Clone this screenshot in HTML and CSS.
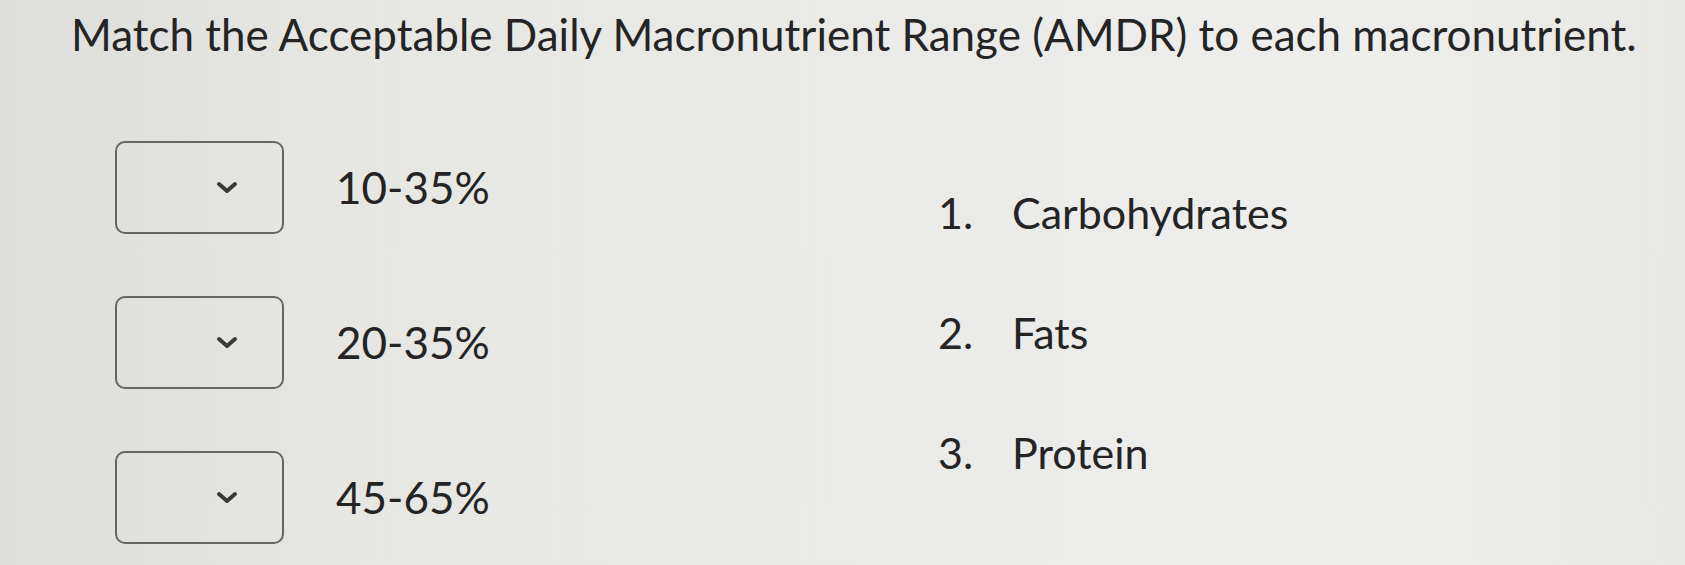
FILE: index.html
```html
<!DOCTYPE html>
<html lang="en">
<head>
    <meta charset="UTF-8">
    <meta name="viewport" content="width=device-width, initial-scale=1.0">
    <title>AMDR Matching</title>
    <link rel="stylesheet" href="styles.css">
</head>
<body>
    <h1 class="question">Match the Acceptable Daily Macronutrient Range (AMDR) to each macronutrient.</h1>
    <div class="match">
        <div class="prompts">
            <div class="prompt">
                <div class="select">
                    <svg class="chevron" viewBox="0 0 22 13" width="22" height="13"><path d="M3 3 L11 10 L19 3"/></svg>
                </div>
                <span class="label">10-35%</span>
            </div>
            <div class="prompt">
                <div class="select">
                    <svg class="chevron" viewBox="0 0 22 13" width="22" height="13"><path d="M3 3 L11 10 L19 3"/></svg>
                </div>
                <span class="label">20-35%</span>
            </div>
            <div class="prompt">
                <div class="select">
                    <svg class="chevron" viewBox="0 0 22 13" width="22" height="13"><path d="M3 3 L11 10 L19 3"/></svg>
                </div>
                <span class="label">45-65%</span>
            </div>
        </div>
        <ol class="answers">
            <li><span class="num">1.</span>Carbohydrates</li>
            <li><span class="num">2.</span>Fats</li>
            <li><span class="num">3.</span>Protein</li>
        </ol>
    </div>
</body>
</html>
```

FILE: styles.css
```css
body {
    margin: 0;
    padding: 7px 0 0 71px;
    height: 565px;
    box-sizing: border-box;
    overflow: hidden;
    font-family: Lato, "Open Sans", sans-serif;
    color: #242424;
    background: linear-gradient(90deg, #dddddb 0%, #e6e6e3 20%, #ebebe9 60%, #eeeeec 80%, #e7e7e4 100%);
}
.question {
    margin: 0;
    font-size: 44px;
    font-weight: 400;
    line-height: 55px;
    white-space: nowrap;
}
.match {
    display: flex;
    margin-top: 79px;
}
.prompts {
    display: flex;
    flex-direction: column;
    gap: 62px;
    margin-left: 44px;
    width: 823px;
}
.prompt {
    display: flex;
    align-items: center;
    gap: 52px;
}
.select {
    width: 169px;
    height: 93px;
    box-sizing: border-box;
    border: 2px solid #666;
    border-radius: 10px;
    display: flex;
    align-items: center;
    justify-content: flex-end;
    padding-right: 44px;
}
.chevron path {
    fill: none;
    stroke: #3a3a3a;
    stroke-width: 4;
    stroke-linecap: round;
    stroke-linejoin: round;
}
.label {
    font-size: 44px;
    line-height: 55px;
}
.answers {
    list-style: none;
    margin: 0;
    padding: 44px 0 0;
    display: flex;
    flex-direction: column;
    gap: 65px;
}
.answers li {
    display: flex;
    font-size: 43px;
    line-height: 55px;
}
.num {
    width: 74px;
}
```
